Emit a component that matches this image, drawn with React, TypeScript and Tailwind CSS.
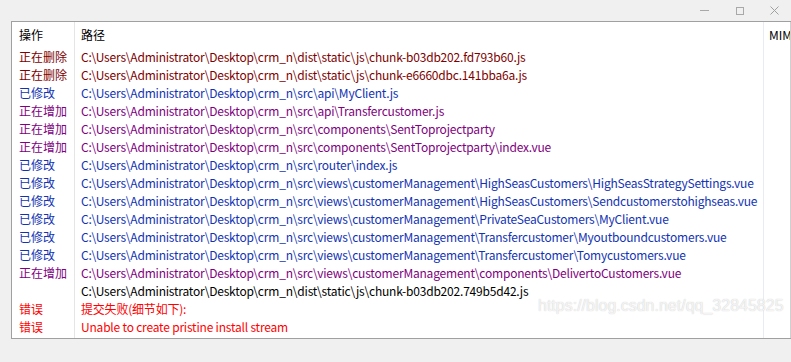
import React from "react";

// rows shown in the commit log list
type Row = { op: string; path: string; color: string };

const DEL = "text-[#800000]";
const ADD = "text-[#800080]";
const MOD = "text-[#1233b4]";
const ERR = "text-[#ff0000]";
const BLK = "text-[#000000]";

const base = "C:\\Users\\Administrator\\Desktop\\crm_n\\";

const rows: Row[] = [
  { op: "正在删除", path: base + "dist\\static\\js\\chunk-b03db202.fd793b60.js", color: DEL },
  { op: "正在删除", path: base + "dist\\static\\js\\chunk-e6660dbc.141bba6a.js", color: DEL },
  { op: "已修改", path: base + "src\\api\\MyClient.js", color: MOD },
  { op: "正在增加", path: base + "src\\api\\Transfercustomer.js", color: ADD },
  { op: "正在增加", path: base + "src\\components\\SentToprojectparty", color: ADD },
  { op: "正在增加", path: base + "src\\components\\SentToprojectparty\\index.vue", color: ADD },
  { op: "已修改", path: base + "src\\router\\index.js", color: MOD },
  { op: "已修改", path: base + "src\\views\\customerManagement\\HighSeasCustomers\\HighSeasStrategySettings.vue", color: MOD },
  { op: "已修改", path: base + "src\\views\\customerManagement\\HighSeasCustomers\\Sendcustomerstohighseas.vue", color: MOD },
  { op: "已修改", path: base + "src\\views\\customerManagement\\PrivateSeaCustomers\\MyClient.vue", color: MOD },
  { op: "已修改", path: base + "src\\views\\customerManagement\\Transfercustomer\\Myoutboundcustomers.vue", color: MOD },
  { op: "已修改", path: base + "src\\views\\customerManagement\\Transfercustomer\\Tomycustomers.vue", color: MOD },
  { op: "正在增加", path: base + "src\\views\\customerManagement\\components\\DelivertoCustomers.vue", color: ADD },
  { op: "", path: base + "dist\\static\\js\\chunk-b03db202.749b5d42.js", color: BLK },
  { op: "错误", path: "提交失败(细节如下):", color: ERR },
  { op: "错误", path: "Unable to create pristine install stream", color: ERR },
];

const App = () => {
  return (
    <div
      className="relative w-[791px] h-[362px] bg-[#f0f0f0] overflow-hidden flex flex-col text-[12px]"
      style={{ fontFamily: '"Noto Sans CJK SC", "Noto Sans", sans-serif' }}
    >
      {/* title bar - window buttons */}
      <div className="h-[21px] flex justify-end items-center text-[#9a9a9a]">
        <div className="w-[35px] flex justify-center">
          <div className="w-[9px] h-px bg-[#a8a8a8]" />
        </div>
        <div className="w-[35px] flex justify-center">
          <div className="w-[8px] h-[8px] border border-[#a8a8a8]" />
        </div>
        <div className="w-[34px] flex justify-center">
          <svg width="9" height="9" viewBox="0 0 9 9">
            <path d="M0.5 0.5 L8.5 8.5 M8.5 0.5 L0.5 8.5" stroke="#a0a0a0" strokeWidth="1" />
          </svg>
        </div>
      </div>

      {/* list */}
      <div className="ml-[11px] h-[318px] bg-white border-l border-t border-b border-[#a0a0a0] flex">
        {/* operation column */}
        <div className="w-[63px] border-r border-[#e5e5e5] flex flex-col">
          <div className="h-[26px] pl-[7px] flex items-center text-black">操作</div>
          {rows.map((r, i) => (
            <div key={i} className={`h-[18px] leading-[18px] pl-[7px] whitespace-nowrap ${r.color}`}>
              {r.op}
            </div>
          ))}
        </div>
        {/* path column */}
        <div className="w-[689px] border-r border-[#e6ecf2] flex flex-col">
          <div className="h-[26px] pl-[6px] flex items-center text-black">路径</div>
          {rows.map((r, i) => (
            <div key={i} className={`h-[18px] leading-[18px] pl-[6px] whitespace-nowrap tracking-[-0.2px] ${r.color}`}>
              {r.path}
            </div>
          ))}
        </div>
        {/* mime column */}
        <div className="flex-1 border-r border-[#d0d0d0] overflow-hidden">
          <div className="h-[26px] pl-[5px] flex items-center text-black whitespace-nowrap">MIM</div>
        </div>
      </div>

      {/* watermark */}
      <div className="absolute left-[538px] top-[294px] text-[16px] text-white/80 [text-shadow:0_0_1px_#bbb] whitespace-nowrap" style={{ fontFamily: '"Liberation Sans", Arial, sans-serif' }}>
        https://blog.csdn.net/qq_32845825
      </div>
    </div>
  );
};

export default App;
